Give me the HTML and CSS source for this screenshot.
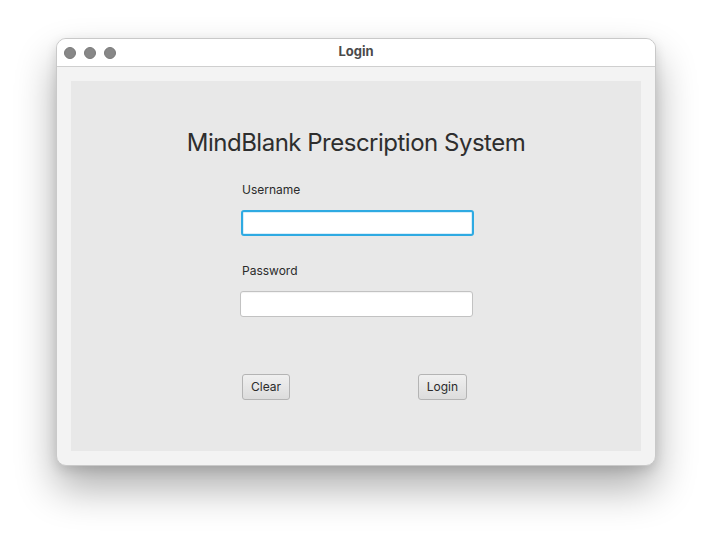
FILE: index.html
```html
<!DOCTYPE html>
<html>
<head>
<meta charset="utf-8">
<title>Login</title>
<link rel="stylesheet" href="styles.css">
</head>
<body>
<div class="window">
  <div class="titlebar">
    <div class="lights">
      <span class="light"></span>
      <span class="light"></span>
      <span class="light"></span>
    </div>
    <div class="wtitle">Login</div>
  </div>
  <div class="content">
    <div class="panel">
      <h1 class="heading">MindBlank Prescription System</h1>
      <div class="form">
        <label class="label label-user">Username</label>
        <input class="field field-focus" type="text">
        <label class="label label-pass">Password</label>
        <input class="field field-pass" type="password">
        <div class="buttons">
          <button class="btn">Clear</button>
          <button class="btn">Login</button>
        </div>
      </div>
    </div>
  </div>
</div>
</body>
</html>
```
FILE: styles.css
```css
html, body {
  margin: 0;
  padding: 0;
  background: #ffffff;
  height: 100%;
}
body {
  box-sizing: border-box;
  min-height: 540px;
  padding: 38px 0 0 56px;
  font-family: Inter, "Liberation Sans", sans-serif;
  color: #2b2b2b;
}
.window {
  width: 600px;
  height: 428px;
  box-sizing: border-box;
  border-radius: 10px;
  overflow: hidden;
  background: #f3f3f3;
  border: 1px solid #c9c9c9;
  box-shadow: 0 22px 40px rgba(0, 0, 0, 0.32), 0 4px 12px rgba(0, 0, 0, 0.12);
  display: flex;
  flex-direction: column;
}
.titlebar {
  height: 27px;
  flex: none;
  background: #ffffff;
  border-bottom: 1px solid #cfcfcf;
  position: relative;
  display: flex;
  align-items: center;
}
.lights {
  display: flex;
  gap: 8px;
  padding-left: 7px;
}
.light {
  width: 12px;
  height: 12px;
  border-radius: 50%;
  background: #878787;
  box-sizing: border-box;
  border: 1px solid #7a7a7a;
}
.wtitle {
  position: absolute;
  left: 0;
  right: 0;
  top: -1px;
  line-height: 27px;
  text-align: center;
  font-size: 13px;
  font-weight: 700;
  color: #4a4a4a;
  pointer-events: none;
}
.content {
  flex: 1;
  padding: 14px;
}
.panel {
  height: 370px;
  background: #e8e8e8;
  overflow: hidden;
}
.heading {
  margin: 48px 0 0 0;
  font-size: 24px;
  line-height: 28px;
  font-weight: 400;
  text-align: center;
  color: #2e2e2e;
  letter-spacing: -0.5px;
}
.form {
  margin-left: 170px;
  width: 233px;
  display: flex;
  flex-direction: column;
}
.label {
  font-size: 12px;
  line-height: 16px;
  padding-left: 1px;
  color: #2b2b2b;
}
.label-user {
  margin-top: 25px;
}
.label-pass {
  margin-top: 27px;
}
.field {
  box-sizing: border-box;
  height: 26px;
  margin: 12px 0 0 0;
  background: #ffffff;
  border-radius: 3px;
  font-family: inherit;
  font-size: 13px;
  padding: 0 6px;
  outline: none;
}
.field-focus {
  width: 233px;
  border: 2px solid #2eaae2;
  box-shadow: inset 0 0 0 1px #d8eefa;
}
.field-pass {
  width: 233px;
  margin-left: -1px;
  border: 1px solid #c2c2c2;
  box-shadow: inset 0 1px 1px rgba(0, 0, 0, 0.05);
}
.buttons {
  margin-top: 57px;
  margin-left: 1px;
  width: 225px;
  display: flex;
  justify-content: space-between;
}
.btn {
  height: 26px;
  padding: 0 8px;
  box-sizing: border-box;
  border: 1px solid #b4b4b4;
  border-radius: 3px;
  background: linear-gradient(#f0f0f0, #dcdcdc);
  font-family: inherit;
  font-size: 12px;
  color: #2b2b2b;
  line-height: 24px;
}
```
